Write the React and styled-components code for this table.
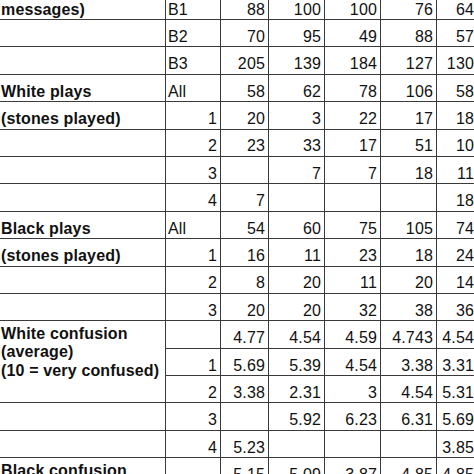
import React from "react";
import styled, { createGlobalStyle } from "styled-components";

const Global = createGlobalStyle`
  html, body { margin: 0; padding: 0; background: #fff; overflow: hidden; }
  body { font-family: "Liberation Sans", Arial, Helvetica, sans-serif; }
`;

const Sheet = styled.div`
  display: grid;
  grid-template-columns: 166px 54px 47px 55px 55px 55px 40px;
  grid-auto-rows: 26.4px;
  gap: 1px;
  background: #3a3a3a;
  margin: -7.4px 0 0 -1px;
  width: max-content;
  border-right: 1px solid #3a3a3a;
`;

const Cell = styled.div`
  background: #fff;
  color: #111;
  font-size: 16px;
  letter-spacing: 0.15px;
  line-height: 18.5px;
  font-weight: ${(p) => (p.$bold ? 700 : 400)};
  display: flex;
  flex-direction: column;
  justify-content: ${(p) => (p.$top ? "flex-start" : "flex-end")};
  align-items: ${(p) => (p.$right ? "flex-end" : "flex-start")};
  padding: ${(p) => (p.$top ? "3.4px 3px 0 2px" : "0 3px 0 2px")};
  white-space: nowrap;
  grid-row: ${(p) => (p.$span ? `span ${p.$span}` : "auto")};
`;

const Line = styled.span`
  display: block;
`;

const rows = [
  { label: "messages)", sub: "B1", v: ["88", "100", "100", "76", "64"] },
  { sub: "B2", v: ["70", "95", "49", "88", "57"] },
  { sub: "B3", v: ["205", "139", "184", "127", "130"] },
  { label: "White plays", sub: "All", v: ["58", "62", "78", "106", "58"] },
  { label: "(stones played)", sub: "1", num: true, v: ["20", "3", "22", "17", "18"] },
  { label: "", sub: "2", num: true, v: ["23", "33", "17", "51", "10"] },
  { label: "", sub: "3", num: true, v: ["", "7", "7", "18", "11"] },
  { label: "", sub: "4", num: true, v: ["7", "", "", "", "18"] },
  { label: "Black plays", sub: "All", v: ["54", "60", "75", "105", "74"] },
  { label: "(stones played)", sub: "1", num: true, v: ["16", "11", "23", "18", "24"] },
  { label: "", sub: "2", num: true, v: ["8", "20", "11", "20", "14"] },
  { label: "", sub: "3", num: true, v: ["20", "20", "32", "38", "36"] },
  {
    block: ["White confusion", "(average)", "(10 = very confused)"],
    span: 3,
    sub: "",
    num: true,
    v: ["4.77", "4.54", "4.59", "4.743", "4.54"],
  },
  { skip: true, sub: "1", num: true, v: ["5.69", "5.39", "4.54", "3.38", "3.31"] },
  { skip: true, sub: "2", num: true, v: ["3.38", "2.31", "3", "4.54", "5.31"] },
  { label: "", sub: "3", num: true, v: ["", "5.92", "6.23", "6.31", "5.69"] },
  { label: "", sub: "4", num: true, v: ["5.23", "", "", "", "3.85"] },
  {
    block: ["Black confusion", "(average)", "(10 = very confused)"],
    span: 3,
    sub: "",
    num: true,
    v: ["5.15", "5.09", "3.87", "4.85", "4.85"],
  },
  { skip: true, sub: "1", num: true, v: ["", "", "", "", ""] },
  { skip: true, sub: "2", num: true, v: ["", "", "", "", ""] },
];

export default function App() {
  return (
    <>
      <Global />
      <Sheet>
        {rows.map((r, i) => (
          <React.Fragment key={i}>
            {r.block ? (
              <Cell $bold $top $span={r.span}>
                {r.block.map((t) => (
                  <Line key={t}>{t}</Line>
                ))}
              </Cell>
            ) : r.skip ? null : (
              <Cell $bold>{r.label || ""}</Cell>
            )}
            <Cell $right={r.num}>{r.sub}</Cell>
            {r.v.map((x, j) => (
              <Cell key={j} $right>
                {x}
              </Cell>
            ))}
          </React.Fragment>
        ))}
      </Sheet>
    </>
  );
}
